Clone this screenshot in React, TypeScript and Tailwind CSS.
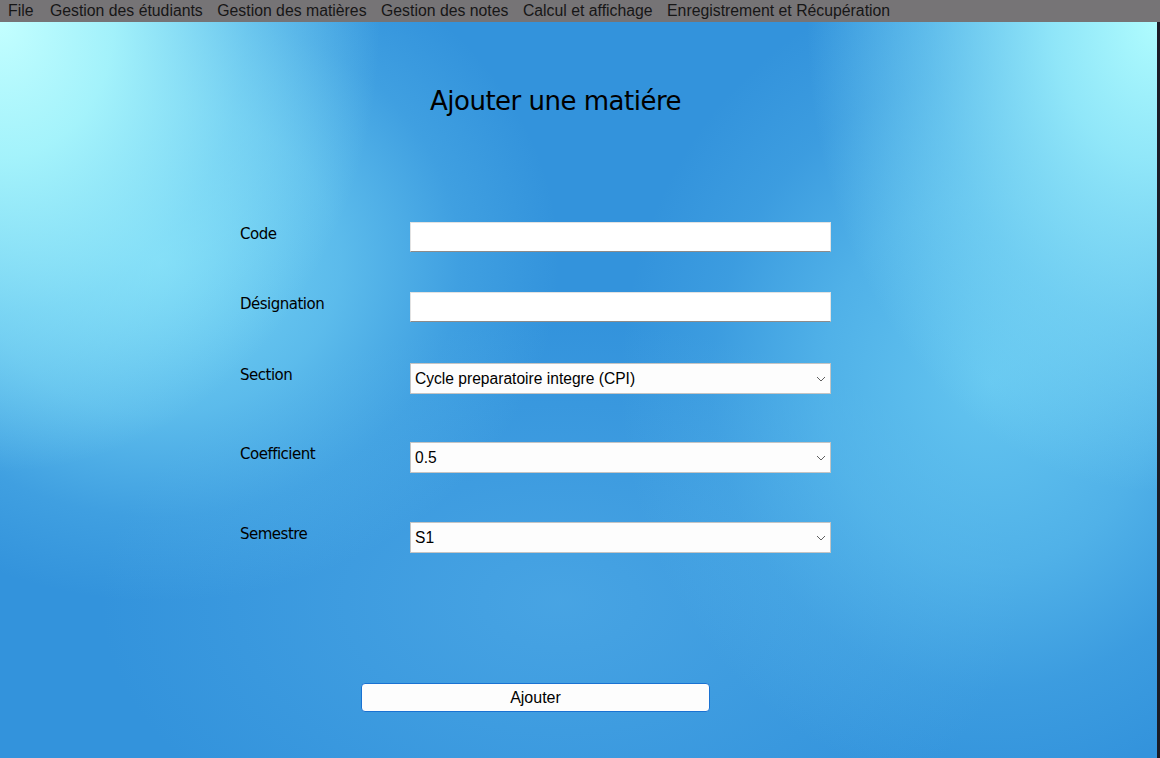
import { useState } from 'react';

const menus = [
  'File',
  'Gestion des étudiants',
  'Gestion des matières',
  'Gestion des notes',
  'Calcul et affichage',
  'Enregistrement et Récupération',
];

function Chevron() {
  return (
    <svg
      className="pointer-events-none absolute right-[5px] top-1/2 -translate-y-1/2"
      width="10"
      height="6"
      viewBox="0 0 10 6"
      fill="none"
    >
      <path d="M1 1l4 4 4-4" stroke="#606060" strokeWidth="1" />
    </svg>
  );
}

function Field({ label, top, children }: { label: string; top: string; children: React.ReactNode }) {
  return (
    <div className={`flex items-start ${top}`}>
      <label className="mt-[3px] w-[170px] font-['DejaVu_Sans',sans-serif] text-[15px] leading-[18px] tracking-[-0.5px] text-black">
        {label}
      </label>
      {children}
    </div>
  );
}

function SelectBox({ options, value, onChange }: { options: string[]; value: string; onChange: (v: string) => void }) {
  return (
    <div className="relative w-[421px]">
      <select
        value={value}
        onChange={(e) => onChange(e.target.value)}
        className="h-[31px] w-full appearance-none border border-[#c4c4c4] bg-[#fdfdfd] pl-[4px] font-['Liberation_Sans',Arial,sans-serif] text-[15.6px] text-black outline-none"
      >
        {options.map((o) => (
          <option key={o}>{o}</option>
        ))}
      </select>
      <Chevron />
    </div>
  );
}

export default function App() {
  const [code, setCode] = useState('');
  const [designation, setDesignation] = useState('');
  const [section, setSection] = useState('Cycle preparatoire integre (CPI)');
  const [coef, setCoef] = useState('0.5');
  const [semestre, setSemestre] = useState('S1');

  return (
    <div className="flex h-[758px] w-full flex-col overflow-hidden">
      {/* barre de menu */}
      <div className="flex h-[22px] w-full items-center bg-[#767476] pl-[8px] font-['Liberation_Sans',Arial,sans-serif] text-[15.8px] leading-none text-[#161616]">
        {menus.map((m, i) => (
          <span key={m} className={i === 0 ? 'mr-[16.5px]' : 'mr-[14.5px]'}>
            {m}
          </span>
        ))}
      </div>

      <div className="flex flex-1">
        <div className="flex-1 bg-[#3393dc] bg-[image:radial-gradient(380px_450px_at_0px_0px,rgba(195,255,255,1)_0%,rgba(172,249,253,0.9)_30%,rgba(150,236,251,0.5)_65%,rgba(150,236,251,0)_100%),radial-gradient(400px_340px_at_160px_240px,rgba(130,224,249,0.85)_0%,rgba(125,220,248,0.55)_45%,rgba(120,216,247,0.18)_75%,rgba(120,216,247,0)_100%),radial-gradient(350px_470px_at_1157px_0px,rgba(175,252,254,1)_0%,rgba(155,240,252,0.88)_30%,rgba(140,230,250,0.48)_65%,rgba(140,230,250,0)_100%),radial-gradient(370px_410px_at_990px_360px,rgba(112,210,245,0.8)_0%,rgba(112,210,245,0.48)_45%,rgba(112,210,245,0.15)_75%,rgba(112,210,245,0)_100%),radial-gradient(460px_280px_at_560px_580px,rgba(85,175,232,0.6)_0%,rgba(85,175,232,0.3)_50%,rgba(85,175,232,0)_100%)] pl-[240px]">
          <h1 className="ml-[190px] mt-[64px] font-['DejaVu_Sans',sans-serif] text-[26px] leading-[30px] tracking-[-0.5px] text-black">
            Ajouter une matiére
          </h1>

          <Field label="Code" top="mt-[106px]">
            <input
              value={code}
              onChange={(e) => setCode(e.target.value)}
              className="h-[30px] w-[421px] border border-[#e2e2e2] border-b-[#8c8c8c] bg-white px-[4px] text-[15px] outline-none"
            />
          </Field>
          <Field label="Désignation" top="mt-[40px]">
            <input
              value={designation}
              onChange={(e) => setDesignation(e.target.value)}
              className="h-[30px] w-[421px] border border-[#e2e2e2] border-b-[#8c8c8c] bg-white px-[4px] text-[15px] outline-none"
            />
          </Field>
          <Field label="Section" top="mt-[41px]">
            <SelectBox
              options={['Cycle preparatoire integre (CPI)', 'Licence', 'Master', 'Ingénieur']}
              value={section}
              onChange={setSection}
            />
          </Field>
          <Field label="Coefficient" top="mt-[48px]">
            <SelectBox options={['0.5', '1', '1.5', '2', '3']} value={coef} onChange={setCoef} />
          </Field>
          <Field label="Semestre" top="mt-[49px]">
            <SelectBox options={['S1', 'S2']} value={semestre} onChange={setSemestre} />
          </Field>

          <button className="ml-[121px] mt-[130px] h-[29px] w-[349px] rounded-[4px] border border-[#1a72d2] bg-[#fdfdfd] font-['Liberation_Sans',Arial,sans-serif] text-[16px] text-black">
            Ajouter
          </button>
        </div>
        <div className="w-[3px] bg-[#1b1c26]" />
      </div>
    </div>
  );
}
